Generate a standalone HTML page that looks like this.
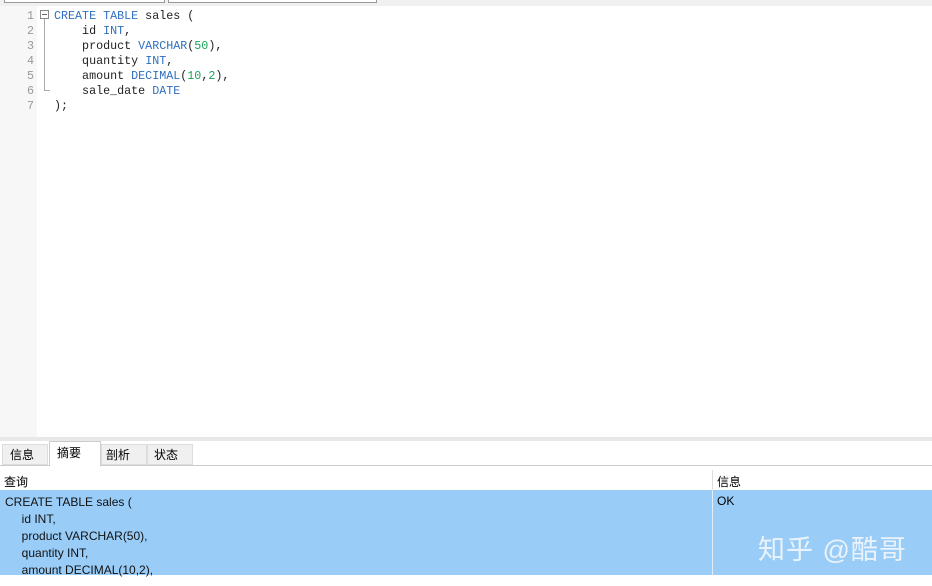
<!DOCTYPE html>
<html><head><meta charset="utf-8"><style>
*{margin:0;padding:0;box-sizing:border-box}
body{width:932px;height:586px;background:#fff;position:relative;overflow:hidden;font-family:"Liberation Sans","Noto Sans CJK SC",sans-serif}
.a{position:absolute}
.code{font-family:"Liberation Mono",monospace;font-size:11.7px;line-height:15px;white-space:pre;color:#222}
.k{color:#2f6fc0}.n{color:#1aa35a}
.ln{color:#999;text-align:right;width:34px;font-family:"Liberation Mono",monospace;font-size:11.7px;line-height:15px}
.cjk{font-size:12px}
</style></head><body>
<div class="a" style="left:0;top:0;width:932px;height:6px;background:#f0f0f0"></div>
<div class="a" style="left:4px;top:0;width:161px;height:3px;border:1px solid #999;border-top:none;background:#fff"></div>
<div class="a" style="left:168px;top:0;width:209px;height:3px;border:1px solid #999;border-top:none;background:#fff"></div>
<div class="a" style="left:0;top:6px;width:37px;height:431px;background:#f7f7f7"></div>
<div class="a ln" style="left:0;top:9px">1<br>2<br>3<br>4<br>5<br>6<br>7</div>
<div class="a" style="left:40px;top:10px;width:9px;height:9px;border:1px solid #888;background:#fff"></div>
<div class="a" style="left:42px;top:14px;width:5px;height:1px;background:#666"></div>
<div class="a" style="left:44px;top:19px;width:1px;height:71px;background:#aaa"></div>
<div class="a" style="left:44px;top:90px;width:6px;height:1px;background:#aaa"></div>
<div class="a code" style="left:54px;top:9px"><span class="k">CREATE TABLE</span> sales (
    id <span class="k">INT</span>,
    product <span class="k">VARCHAR</span>(<span class="n">50</span>),
    quantity <span class="k">INT</span>,
    amount <span class="k">DECIMAL</span>(<span class="n">10</span>,<span class="n">2</span>),
    sale_date <span class="k">DATE</span>
);</div>
<div class="a" style="left:0;top:437px;width:932px;height:4px;background:#e8e8e8"></div>
<div class="a" style="left:0;top:441px;width:932px;height:25px;background:#fff;border-bottom:1px solid #ccc"></div>
<div class="a cjk" style="left:2px;top:444px;width:46px;height:21px;background:#f0f0f0;border:1px solid #ddd;padding:1px 0 0 7px">信息</div>
<div class="a cjk" style="left:49px;top:441px;width:52px;height:25px;background:#fff;border:1px solid #ccc;border-bottom:none;padding:2px 0 0 7px">摘要</div>
<div class="a cjk" style="left:101px;top:444px;width:46px;height:21px;background:#f0f0f0;border:1px solid #ddd;padding:1px 0 0 4px">剖析</div>
<div class="a cjk" style="left:147px;top:444px;width:46px;height:21px;background:#f0f0f0;border:1px solid #ddd;padding:1px 0 0 6px">状态</div>
<div class="a cjk" style="left:4px;top:473px">查询</div>
<div class="a cjk" style="left:717px;top:473px">信息</div>
<div class="a" style="left:712px;top:470px;width:1px;height:105px;background:#ddd"></div>
<div class="a" style="left:0;top:490px;width:932px;height:85px;background:#99cdf8"></div>
<div class="a" style="left:712px;top:490px;width:1px;height:85px;background:#e0eefc"></div>
<div class="a" style="left:5px;top:494px;font-size:12px;line-height:17px;white-space:pre;color:#111">CREATE TABLE sales (
     id INT,
     product VARCHAR(50),
     quantity INT,
     amount DECIMAL(10,2),</div>
<div class="a" style="left:717px;top:494px;font-size:12px">OK</div>
<div class="a" style="left:758px;top:528px;font-size:27px;color:#eaf3fb;letter-spacing:1px">知乎 @酷哥</div>
</body></html>
